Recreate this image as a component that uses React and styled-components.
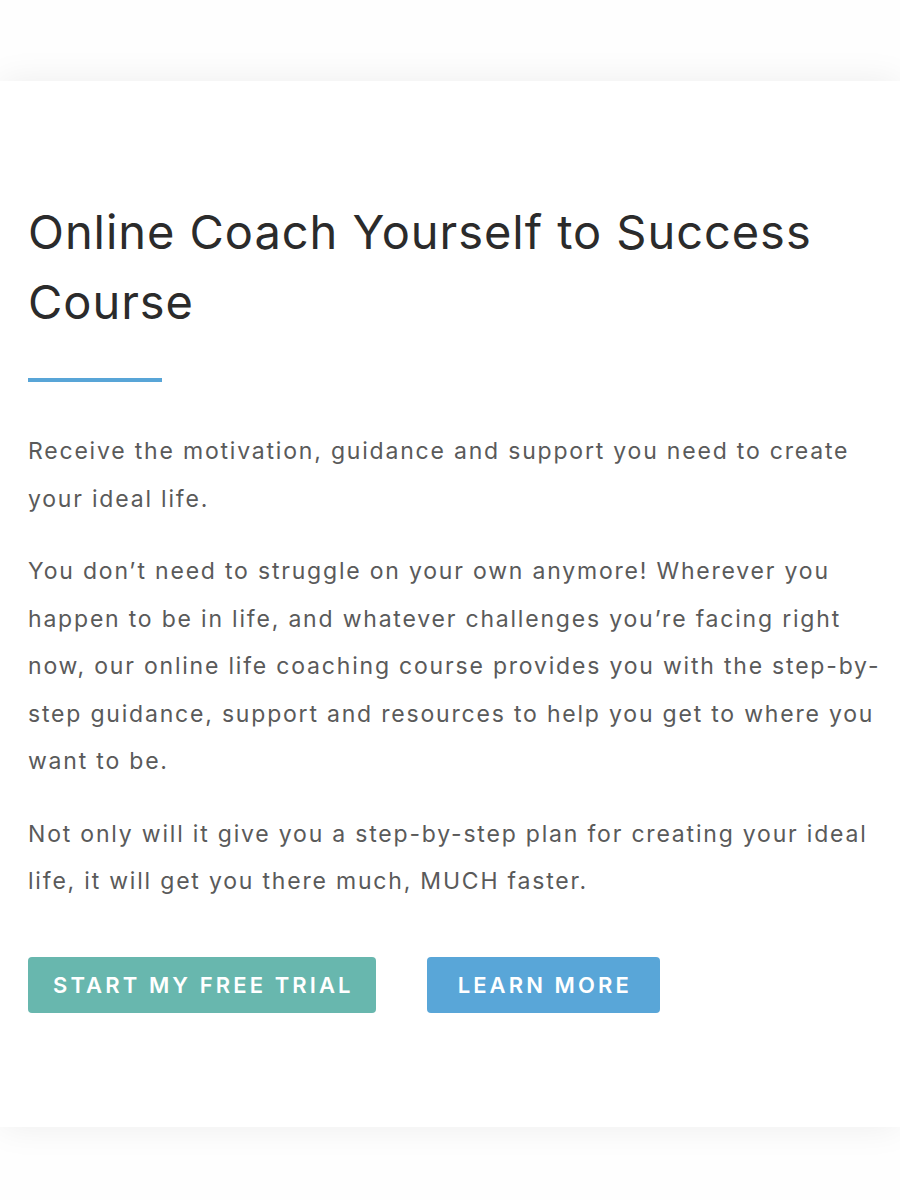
import React from 'react'
import styled, { createGlobalStyle } from 'styled-components'

const GlobalStyle = createGlobalStyle`
   * {
      box-sizing: border-box;
   }
   body {
      margin: 0;
      background-color: #fefefe;
      font-family: Inter, 'Noto Sans', sans-serif;
   }
`

const paragraphs = [
   'Receive the motivation, guidance and support you need to create your ideal life.',
   'You don\u2019t need to struggle on your own anymore! Wherever you happen to be in life, and whatever challenges you\u2019re facing right now, our online life coaching course provides you with the step-by-step guidance, support and resources to help you get to where you want to be.',
   'Not only will it give you a step-by-step plan for creating your ideal life, it will get you there much, MUCH faster.',
]

const App = () => {
   return (
      <>
         <GlobalStyle />
         <Page>
            <Card>
               <Title>Online Coach Yourself to Success Course</Title>
               <Divider />
               <Body>
                  {paragraphs.map((text) => (
                     <Text key={text}>{text}</Text>
                  ))}
               </Body>
               <Actions>
                  <Button color="#68b7ae">Start my free trial</Button>
                  <Button color="#59a6d8" $extra="6px">
                     Learn more
                  </Button>
               </Actions>
            </Card>
         </Page>
      </>
   )
}

const Page = styled.div`
   padding: 81px 0 73px;
   min-height: 1200px;
`
const Card = styled.section`
   background-color: #ffffff;
   box-shadow: 0 0 34px rgba(0, 0, 0, 0.07);
   padding: 116px 18px 114px 28px;
`
const Title = styled.h1`
   margin: 0;
   font-size: 47px;
   line-height: 70px;
   font-weight: 400;
   color: #2b2b2b;
   letter-spacing: 0.95px;
   max-width: 820px;
`
const Divider = styled.div`
   width: 134px;
   height: 4px;
   margin-top: 41px;
   background-color: #58a5d7;
`
const Body = styled.div`
   margin-top: 46px;
   display: flex;
   flex-direction: column;
   gap: 25px;
`
const Text = styled.p`
   margin: 0;
   font-size: 23px;
   line-height: 47.5px;
   font-weight: 400;
   color: #5a5a5a;
   letter-spacing: 1.8px;
`
const Actions = styled.div`
   margin-top: 51px;
   display: flex;
   gap: 51px;
`
const Button = styled.button`
   height: 56px;
   padding: 0 calc(22px + ${(props) => props.$extra || '0px'}) 0
      calc(25px + ${(props) => props.$extra || '0px'});
   border: none;
   border-radius: 4px;
   background-color: ${(props) => props.color};
   color: #ffffff;
   font-family: Inter, 'Noto Sans', sans-serif;
   font-size: 22px;
   font-weight: 600;
   letter-spacing: 3.1px;
   text-transform: uppercase;
   cursor: pointer;
`

export default App
